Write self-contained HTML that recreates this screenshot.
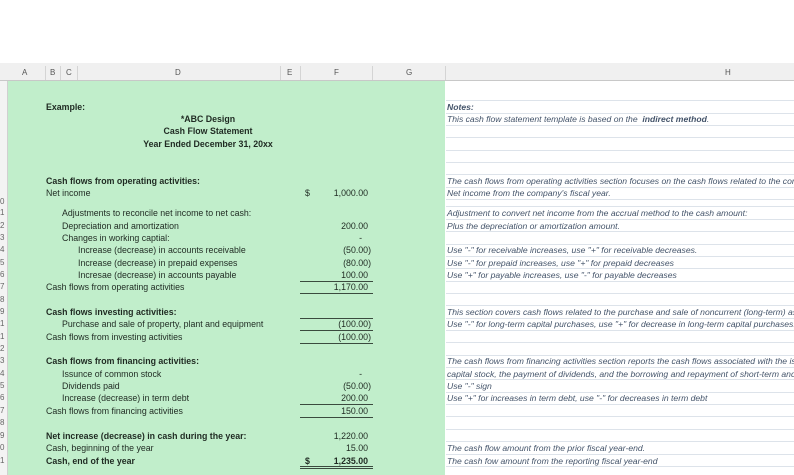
<!DOCTYPE html>
<html><head><meta charset="utf-8"><style>
body{margin:0;width:794px;height:475px;overflow:hidden;background:#fff;font-family:"Liberation Sans",Arial,sans-serif;position:relative}
.a{position:absolute;white-space:nowrap;font-size:8.8px;line-height:10px;color:#1f2a22}
.b{font-weight:bold}
.r{text-align:right}
.h{position:absolute;white-space:nowrap;font-size:8.6px;line-height:10px;color:#44546a;font-style:italic;left:447px}
.ln{position:absolute;height:1px;background:#3a4a3e}
.hl{position:absolute;left:446px;width:348px;height:1px;background:#dde3ea}
.col{position:absolute;top:66px;font-size:8px;color:#555;line-height:14px}
.rn{position:absolute;left:0;font-size:8px;color:#666;line-height:10px}
.sep{position:absolute;top:66px;height:14px;width:1px;background:#d4d4d4}
</style></head><body>
<div style="position:absolute;left:0;top:63px;width:794px;height:17px;background:#f0f0f0;border-bottom:1px solid #c8c8c8"></div>
<div class="sep" style="left:45px"></div><div class="sep" style="left:60px"></div><div class="sep" style="left:77px"></div><div class="sep" style="left:280px"></div><div class="sep" style="left:300px"></div><div class="sep" style="left:372px"></div><div class="sep" style="left:445px"></div>
<div class="col" style="left:22px">A</div><div class="col" style="left:50px">B</div><div class="col" style="left:66px">C</div><div class="col" style="left:175px">D</div><div class="col" style="left:287px">E</div><div class="col" style="left:334px">F</div><div class="col" style="left:406px">G</div><div class="col" style="left:725px">H</div>
<div style="position:absolute;left:0;top:81px;width:7px;height:394px;background:#f3f3f3;border-right:1px solid #d0d0d0"></div>
<div style="position:absolute;left:8px;top:81px;width:437px;height:394px;background:#c1eecb"></div>
<div class="hl" style="top:100px"></div><div class="hl" style="top:113px"></div><div class="hl" style="top:125px"></div><div class="hl" style="top:137px"></div><div class="hl" style="top:150px"></div><div class="hl" style="top:162px"></div><div class="hl" style="top:174px"></div><div class="hl" style="top:187px"></div><div class="hl" style="top:199px"></div><div class="hl" style="top:206px"></div><div class="hl" style="top:219px"></div><div class="hl" style="top:231px"></div><div class="hl" style="top:244px"></div><div class="hl" style="top:256px"></div><div class="hl" style="top:268px"></div><div class="hl" style="top:281px"></div><div class="hl" style="top:293px"></div><div class="hl" style="top:305px"></div><div class="hl" style="top:318px"></div><div class="hl" style="top:330px"></div><div class="hl" style="top:342px"></div><div class="hl" style="top:355px"></div><div class="hl" style="top:367px"></div><div class="hl" style="top:379px"></div><div class="hl" style="top:392px"></div><div class="hl" style="top:404px"></div><div class="hl" style="top:416px"></div><div class="hl" style="top:429px"></div><div class="hl" style="top:441px"></div><div class="hl" style="top:454px"></div><div class="hl" style="top:466px"></div>
<div class="rn" style="top:197px">0</div><div class="rn" style="top:208px">1</div><div class="rn" style="top:221px">2</div><div class="rn" style="top:233px">3</div><div class="rn" style="top:245px">4</div><div class="rn" style="top:258px">5</div><div class="rn" style="top:270px">6</div><div class="rn" style="top:282px">7</div><div class="rn" style="top:295px">8</div><div class="rn" style="top:307px">9</div><div class="rn" style="top:319px">1</div><div class="rn" style="top:332px">1</div><div class="rn" style="top:344px">2</div><div class="rn" style="top:356px">3</div><div class="rn" style="top:369px">4</div><div class="rn" style="top:381px">5</div><div class="rn" style="top:393px">6</div><div class="rn" style="top:406px">7</div><div class="rn" style="top:418px">8</div><div class="rn" style="top:431px">9</div><div class="rn" style="top:443px">0</div><div class="rn" style="top:456px">1</div>

<div class="a b" style="left:46px;top:102px">Example:</div>
<div class="a b" style="left:108px;width:200px;text-align:center;top:114px">*ABC Design</div>
<div class="a b" style="left:108px;width:200px;text-align:center;top:126px">Cash Flow Statement</div>
<div class="a b" style="left:108px;width:200px;text-align:center;top:139px">Year Ended December 31, 20xx</div>

<div class="a b" style="left:46px;top:176px">Cash flows from operating activities:</div>
<div class="a" style="left:46px;top:188px">Net income</div>
<div class="a" style="left:62px;top:208px">Adjustments to reconcile net income to net cash:</div>
<div class="a" style="left:62px;top:221px">Depreciation and amortization</div>
<div class="a" style="left:62px;top:233px">Changes in working captial:</div>
<div class="a" style="left:78px;top:245px">Increase (decrease) in accounts receivable</div>
<div class="a" style="left:78px;top:258px">Increase (decrease) in prepaid expenses</div>
<div class="a" style="left:78px;top:270px">Incresae (decrease) in accounts payable</div>
<div class="a" style="left:46px;top:282px">Cash flows from operating activities</div>
<div class="a b" style="left:46px;top:307px">Cash flows investing activities:</div>
<div class="a" style="left:62px;top:319px">Purchase and sale of property, plant and equipment</div>
<div class="a" style="left:46px;top:332px">Cash flows from investing activities</div>
<div class="a b" style="left:46px;top:356px">Cash flows from financing activities:</div>
<div class="a" style="left:62px;top:369px">Issunce of common stock</div>
<div class="a" style="left:62px;top:381px">Dividends paid</div>
<div class="a" style="left:62px;top:393px">Increase (decrease) in term debt</div>
<div class="a" style="left:46px;top:406px">Cash flows from financing activities</div>
<div class="a b" style="left:46px;top:431px">Net increase (decrease) in cash during the year:</div>
<div class="a" style="left:46px;top:443px">Cash, beginning of the year</div>
<div class="a b" style="left:46px;top:456px">Cash, end of the year</div>

<div class="a" style="left:305px;top:188px">$</div>
<div class="a b" style="left:305px;top:456px">$</div>
<div class="a r" style="left:300px;width:68px;top:188px">1,000.00</div>
<div class="a r" style="left:300px;width:68px;top:221px">200.00</div>
<div class="a r" style="left:300px;width:62px;top:233px">-</div>
<div class="a r" style="left:300px;width:71px;top:245px">(50.00)</div>
<div class="a r" style="left:300px;width:71px;top:258px">(80.00)</div>
<div class="a r" style="left:300px;width:68px;top:270px">100.00</div>
<div class="a r" style="left:300px;width:68px;top:282px">1,170.00</div>
<div class="a r" style="left:300px;width:71px;top:319px">(100.00)</div>
<div class="a r" style="left:300px;width:71px;top:332px">(100.00)</div>
<div class="a r" style="left:300px;width:62px;top:369px">-</div>
<div class="a r" style="left:300px;width:71px;top:381px">(50.00)</div>
<div class="a r" style="left:300px;width:68px;top:393px">200.00</div>
<div class="a r" style="left:300px;width:68px;top:406px">150.00</div>
<div class="a r" style="left:300px;width:68px;top:431px">1,220.00</div>
<div class="a r" style="left:300px;width:68px;top:443px">15.00</div>
<div class="a r b" style="left:300px;width:68px;top:456px">1,235.00</div>

<div class="ln" style="left:300px;width:73px;top:281px"></div>
<div class="ln" style="left:300px;width:73px;top:293px"></div>
<div class="ln" style="left:300px;width:73px;top:318px"></div>
<div class="ln" style="left:300px;width:73px;top:330px"></div>
<div class="ln" style="left:300px;width:73px;top:343px"></div>
<div class="ln" style="left:300px;width:73px;top:404px"></div>
<div class="ln" style="left:300px;width:73px;top:417px"></div>
<div class="ln" style="left:300px;width:73px;top:466px"></div>
<div class="ln" style="left:300px;width:73px;top:468px"></div>

<div class="h b" style="top:102px">Notes:</div>
<div class="h" style="top:114px">This cash flow statement template is based on the &nbsp;<b>indirect method</b>.</div>
<div class="h" style="top:176px">The cash flows from operating activities section focuses on the cash flows related to the company's</div>
<div class="h" style="top:188px">Net income from the company's fiscal year.</div>
<div class="h" style="top:208px">Adjustment to convert net income from the accrual method to the cash amount:</div>
<div class="h" style="top:221px">Plus the depreciation or amortization amount.</div>
<div class="h" style="top:245px">Use "-" for receivable increases, use "+" for receivable decreases.</div>
<div class="h" style="top:258px">Use "-" for prepaid increases, use "+" for prepaid decreases</div>
<div class="h" style="top:270px">Use "+" for payable increases, use "-" for payable decreases</div>
<div class="h" style="top:307px">This section covers cash flows related to the purchase and sale of noncurrent (long-term) assets</div>
<div class="h" style="top:319px">Use "-" for long-term capital purchases, use "+" for decrease in long-term capital purchases.</div>
<div class="h" style="top:356px">The cash flows from financing activities section reports the cash flows associated with the issuance</div>
<div class="h" style="top:369px">capital stock, the payment of dividends, and the borrowing and repayment of short-term and long</div>
<div class="h" style="top:381px">Use "-" sign</div>
<div class="h" style="top:393px">Use "+" for increases in term debt, use "-" for decreases in term debt</div>
<div class="h" style="top:443px">The cash flow amount from the prior fiscal year-end.</div>
<div class="h" style="top:456px">The cash fow amount from the reporting fiscal year-end</div>
</body></html>
